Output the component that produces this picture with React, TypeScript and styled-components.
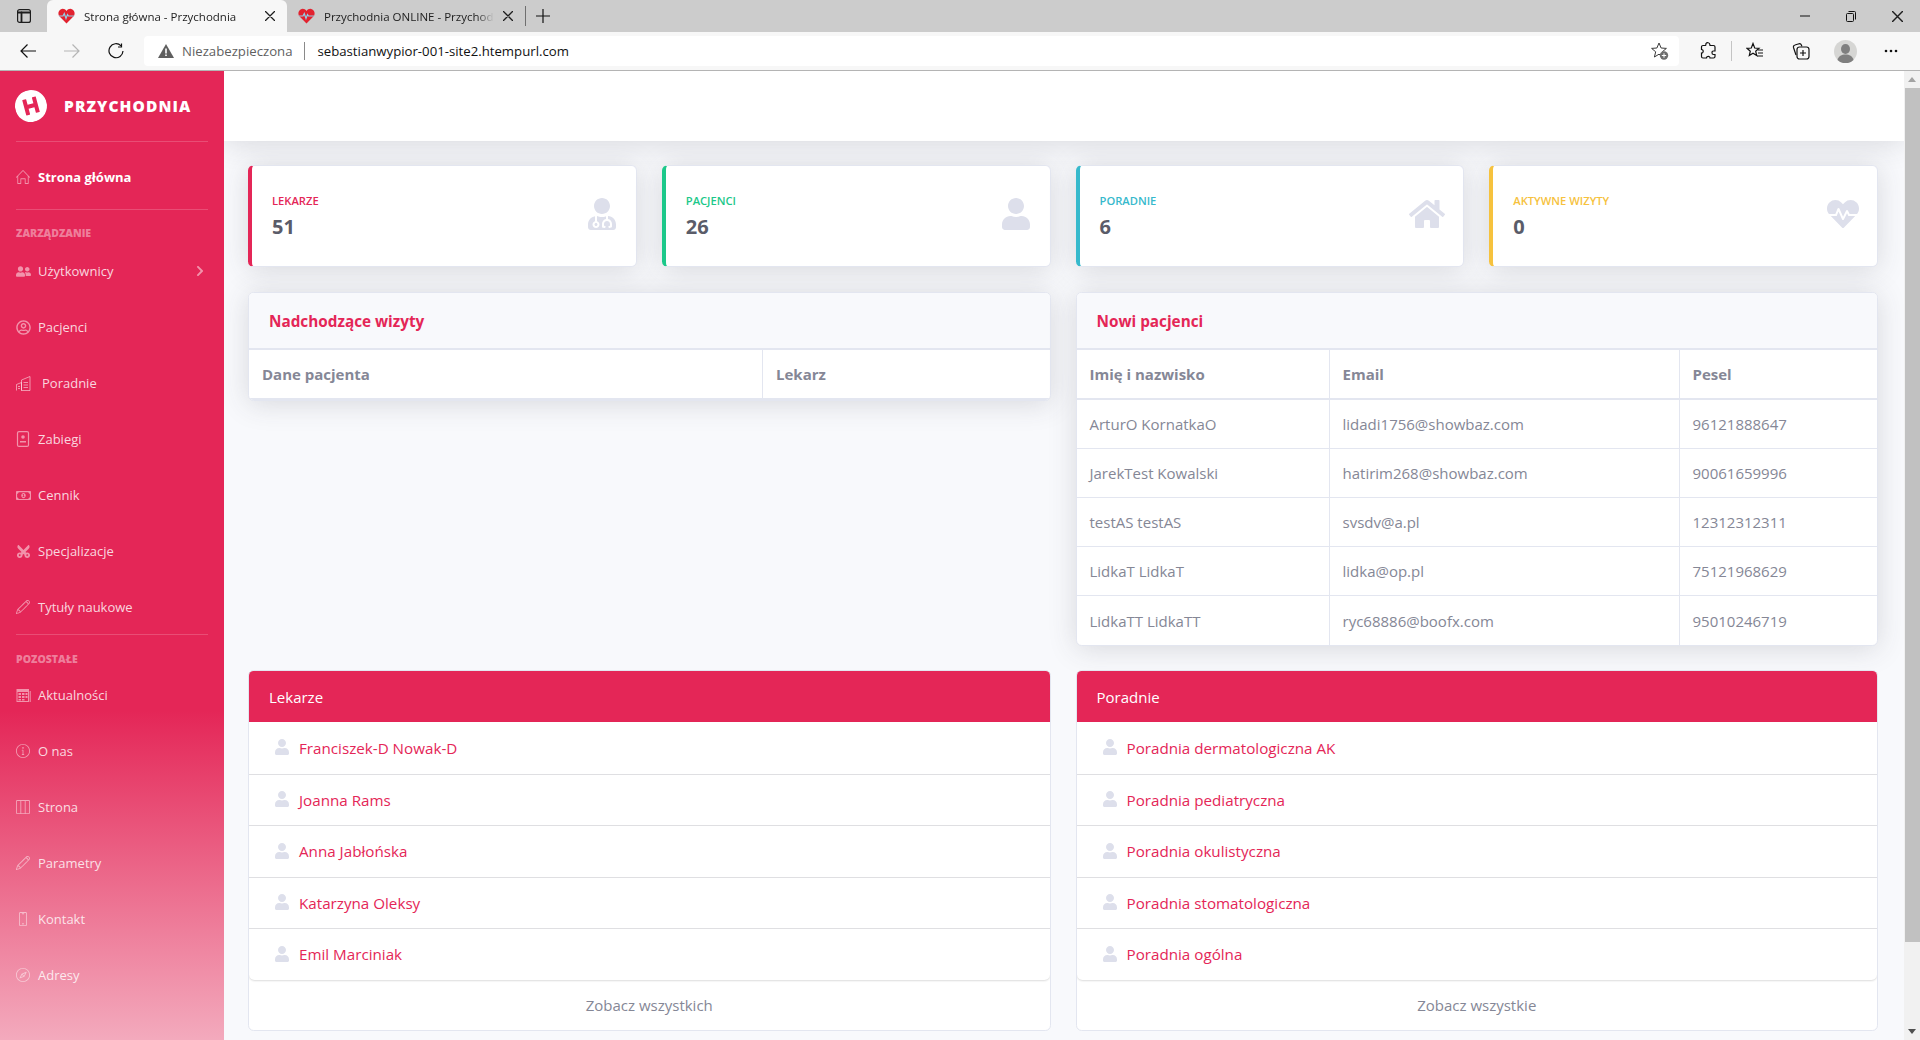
import React from "react";
import styled, { createGlobalStyle } from "styled-components";
import {
  FaUserMd,
  FaUser,
  FaHome,
  FaHeartbeat,
  FaHospitalSymbol,
  FaUserFriends,
  FaRegUserCircle,
  FaRegMoneyBillAlt,
  FaCut,
  FaChevronRight,
} from "react-icons/fa";
import { SlHome, SlPencil, SlInfo, SlScreenSmartphone, SlCompass } from "react-icons/sl";
import { BsLayoutThreeColumns } from "react-icons/bs";

const GlobalStyle = createGlobalStyle`
  * { box-sizing: border-box; }
  html, body { margin: 0; padding: 0; height: 100%; overflow: hidden; }
  body { font-family: "Open Sans", "Noto Sans", "Liberation Sans", sans-serif; background: #f8f9fc; }
`;

const red = "#e42657";
const softShadow = "0 2.4px 28px 0 rgba(58, 59, 69, 0.17)";

// browser chrome
const Window = styled.div`
  width: 1920px;
  height: 1040px;
  display: flex;
  flex-direction: column;
  overflow: hidden;
`;

const TabStrip = styled.div`
  height: 32px;
  flex: none;
  background: #cccccc;
  display: flex;
  align-items: stretch;
  color: #1d1d1d;
`;

const PanelButton = styled.div`
  width: 47px;
  display: flex;
  align-items: center;
  justify-content: center;
`;

const Tab = styled.div<{ $active?: boolean }>`
  width: ${(p) => (p.$active ? 240 : 238)}px;
  padding: 0 12px 0 11px;
  display: flex;
  align-items: center;
  gap: 9px;
  font-size: 11.5px;
  background: ${(p) => (p.$active ? "#f7f7f7" : "transparent")};
  border-radius: 6px 6px 0 0;
`;

const TabTitle = styled.span`
  flex: 1;
  white-space: nowrap;
  overflow: hidden;
  -webkit-mask-image: linear-gradient(90deg, #000 90%, transparent);
  mask-image: linear-gradient(90deg, #000 90%, transparent);
`;

const TabDivider = styled.div`
  width: 1px;
  height: 20px;
  margin: 6px 0 0;
  background: #6f6f6f;
`;

const NewTab = styled.div`
  width: 34px;
  display: flex;
  align-items: center;
  justify-content: center;
`;

const StripSpace = styled.div`
  flex: 1;
`;

const WinButton = styled.div`
  width: 46px;
  display: flex;
  align-items: center;
  justify-content: center;
`;

const Toolbar = styled.div`
  height: 39px;
  flex: none;
  background: #f7f7f7;
  border-bottom: 1px solid #b4b4b4;
  display: flex;
  align-items: center;
  padding: 0 0 0 6px;
`;

const ToolButton = styled.div<{ $w?: number }>`
  width: ${(p) => p.$w ?? 44}px;
  display: flex;
  align-items: center;
  justify-content: center;
`;

const AddressBar = styled.div`
  width: 1535px;
  height: 30px;
  margin: 0 6px;
  background: #ffffff;
  border-radius: 4px;
  display: flex;
  align-items: center;
  padding: 0 10px 0 14px;
  font-size: 13.2px;
  white-space: nowrap;
`;

const NotSecure = styled.span`
  color: #5f5f5f;
  margin-left: 8px;
`;

const UrlSeparator = styled.span`
  width: 1px;
  height: 18px;
  background: #8a8a8a;
  margin: 0 12px;
`;

const Url = styled.span`
  flex: 1;
  color: #111111;
`;

const ToolSeparator = styled.span`
  width: 1px;
  height: 20px;
  background: #c4c4c4;
`;

// page
const Viewport = styled.div`
  flex: 1;
  display: flex;
  min-height: 0;
`;

const Sidebar = styled.aside`
  width: 224px;
  flex: none;
  background: linear-gradient(180deg, ${red} 66%, #f3aabd 100%);
  overflow: hidden;
`;

const Brand = styled.div`
  height: 70px;
  padding-left: 15px;
  display: flex;
  align-items: center;
  gap: 17px;
  color: #ffffff;
  font-weight: 800;
  font-size: 15.5px;
  letter-spacing: 1.1px;
  text-transform: uppercase;
  svg { transform: rotate(-15deg); }
`;

const SideDivider = styled.div<{ $top: number }>`
  height: 1px;
  margin: ${(p) => p.$top}px 16px 0;
  background: rgba(255, 255, 255, 0.18);
`;

const SideHeading = styled.div<{ $low?: boolean }>`
  padding: ${(p) => (p.$low ? 15 : 14)}px 16px 0;
  height: ${(p) => (p.$low ? 32 : 33)}px;
  line-height: 19px;
  font-size: 10.5px;
  font-weight: 800;
  text-transform: uppercase;
  color: rgba(255, 255, 255, 0.42);
`;

const NavItem = styled.div<{ $active?: boolean }>`
  height: 56px;
  padding: 0 16px;
  margin-top: ${(p) => (p.$active ? 7 : 0)}px;
  display: flex;
  align-items: center;
  font-size: 13px;
  font-weight: ${(p) => (p.$active ? 700 : 400)};
  color: ${(p) => (p.$active ? "#ffffff" : "rgba(255,255,255,.82)")};
`;

const NavIcon = styled.span<{ $wide?: boolean }>`
  width: ${(p) => (p.$wide ? 26 : 22)}px;
  flex: none;
  display: flex;
  align-items: center;
  color: rgba(255, 255, 255, 0.5);
`;

const NavLabel = styled.span`
  flex: 1;
`;

const NavArrow = styled.span`
  display: flex;
  padding-right: 2px;
  color: rgba(255, 255, 255, 0.5);
`;

const ScissorsTurn = styled.span`
  display: flex;
  transform: rotate(-90deg);
`;

const Main = styled.main`
  flex: 1;
  min-width: 0;
  overflow: hidden;
`;

const Topbar = styled.div`
  height: 70px;
  background: #ffffff;
  box-shadow: ${softShadow};
`;

const Content = styled.div`
  padding: 24px 26px 0 24px;
`;

const StatGrid = styled.div`
  display: grid;
  grid-template-columns: repeat(4, 1fr);
  gap: 25px;
  margin-bottom: 25px;
`;

const StatCard = styled.div<{ $color: string }>`
  height: 102px;
  background: #ffffff;
  border: 1px solid #e3e6f0;
  border-left: 4px solid ${(p) => p.$color};
  border-radius: 5.6px;
  box-shadow: ${softShadow};
  padding: 0 18px 0 20px;
  display: flex;
  align-items: center;
  justify-content: space-between;
  color: ${(p) => p.$color};
`;

const StatLabel = styled.div`
  font-size: 11.2px;
  font-weight: 600;
  line-height: 16px;
  text-transform: uppercase;
  margin: 2px 0 4px;
`;

const StatValue = styled.div`
  font-size: 20px;
  font-weight: 700;
  line-height: 28px;
  color: #5a5c69;
`;

const StatIcon = styled.div`
  color: #dddfeb;
  display: flex;
  margin-top: -5px;
`;

const TwoCols = styled.div<{ $gap: number }>`
  display: grid;
  grid-template-columns: 1fr 1fr;
  gap: 25px;
  align-items: start;
  margin-bottom: ${(p) => p.$gap}px;
`;

const Panel = styled.section`
  background: #ffffff;
  border: 1px solid #e3e6f0;
  border-radius: 5.6px;
  box-shadow: ${softShadow};
  overflow: hidden;
`;

const PanelHead = styled.div`
  height: 55px;
  background: #f8f9fc;
  padding: 0 20px;
  display: flex;
  align-items: center;
  font-size: 15.3px;
  font-weight: 700;
  color: ${red};
`;

const Table = styled.table`
  width: 100%;
  border-collapse: separate;
  border-spacing: 0;
  table-layout: fixed;
  font-size: 15px;
  color: #858796;
`;

const Col = styled.col<{ $w?: number }>`
  width: ${(p) => (p.$w ? `${p.$w}px` : "auto")};
`;

const Th = styled.th`
  height: 52px;
  padding: 0 13px;
  text-align: left;
  font-weight: 700;
  border-top: 2px solid #e3e6f0;
  border-bottom: 2px solid #e3e6f0;
  border-right: 1px solid #e3e6f0;
  &:last-child { border-right: 0; }
`;

const Td = styled.td`
  height: 49px;
  padding: 0 13px;
  border-bottom: 1px solid #e3e6f0;
  border-right: 1px solid #e3e6f0;
  white-space: nowrap;
  &:last-child { border-right: 0; }
  tr:last-child > & { border-bottom: 0; }
`;

const ListCard = styled.section`
  background: #ffffff;
  border: 1px solid #e3e6f0;
  border-radius: 5.6px;
  overflow: hidden;
`;

const ListHead = styled.div`
  height: 51px;
  background: ${red};
  color: #ffffff;
  padding: 0 20px;
  display: flex;
  align-items: center;
  font-size: 15px;
`;

const List = styled.ul`
  list-style: none;
  margin: 0;
  padding: 0;
  border-radius: 0 0 5.6px 5.6px;
  box-shadow: 0 1px 2px rgba(0, 0, 0, 0.14);
`;

const ListRow = styled.li`
  height: 51.5px;
  padding: 0 0 0 25px;
  display: flex;
  align-items: center;
  gap: 9px;
  color: ${red};
  font-size: 15.2px;
  border-top: 1px solid #dfdfe2;
  &:first-child { border-top: 0; }
  svg { color: #dddfeb; flex: none; margin-top: -1px; }
`;

const ListFooter = styled.div`
  height: 50px;
  display: flex;
  align-items: center;
  justify-content: center;
  font-size: 15px;
  color: #858796;
`;

const Scrollbar = styled.div`
  width: 16px;
  flex: none;
  background: #f1f1f1;
  display: flex;
  flex-direction: column;
  align-items: stretch;
`;

const ScrollArrow = styled.div<{ $down?: boolean }>`
  height: 17px;
  flex: none;
  display: flex;
  align-items: center;
  justify-content: center;
  &::after {
    content: "";
    border-left: 4px solid transparent;
    border-right: 4px solid transparent;
    ${(p) => (p.$down ? "border-top: 5px solid #505050;" : "border-bottom: 5px solid #a3a3a3;")}
  }
`;

const ScrollThumb = styled.div`
  height: 854px;
  flex: none;
  background: #c1c1c1;
  margin-left: 1px;
`;

const ScrollTrack = styled.div`
  flex: 1;
`;

// drawn icons
function Favicon() {
  return (
    <svg width="17" height="16" viewBox="0 0 17 16">
      <path d="M8.500 15.500 1.600 8.600C-.4 6.400.2 2.800 2.600 1.400 4.800.2 7.200 1 8.500 3c1.300-2 3.700-2.800 5.900-1.600 2.400 1.400 3 5 1 7.200z" fill="#e2222f" />
      <path d="M1 8h4l1.300-2.500L8 10.500l1.500-4 1 1.500H16" fill="none" stroke="#8fd0e8" strokeWidth="1.200" />
    </svg>
  );
}

function BuildingIcon() {
  return (
    <svg width="15" height="15" viewBox="0 0 15 15" fill="none" stroke="currentColor" strokeWidth="1">
      <path d="M.5 14.500V8.500l5-2v8M5.500 14.500V4L14 .5v14z" />
      <path d="M7.500 6.500H12M7.500 9H12M7.500 11.500H12M2 10.500h2M2 12.500h2" />
    </svg>
  );
}

function BadgeIcon() {
  return (
    <svg width="14" height="16" viewBox="0 0 14 16" fill="none" stroke="currentColor" strokeWidth="1.200">
      <rect x="1.500" y=".6" width="11" height="14.800" rx="1.500" />
      <circle cx="7" cy="6" r="1.800" fill="currentColor" stroke="none" />
      <path d="M4 10h6v1.500H4z" fill="currentColor" stroke="none" />
    </svg>
  );
}

function CalendarIcon() {
  return (
    <svg width="15" height="15" viewBox="0 0 15 15" fill="currentColor">
      <path d="M.5 1h12.500v13H.5zM1.500 4v9h10.500V4z" />
      <path d="M2.500 5h2.500v2H2.500zM6 5h2.500v2H6zM9.500 5H11.500v2H9.500zM2.500 8h2.500v2H2.500zM6 8h2.500v2H6zM9.500 8H11.500v2H9.500zM2.500 11h2.500v1.500H2.500zM6 11h2.500v1.500H6z" />
      <path d="M13.500 3H15v11h-1.500z" opacity=".7" />
    </svg>
  );
}

const IconLine = { fill: "none", stroke: "currentColor", strokeLinecap: "round" as const };

function PanelIcon() {
  return (
    <svg width="14" height="14" viewBox="0 0 14 14" {...IconLine} strokeWidth="1.200">
      <rect x=".6" y=".6" width="12.800" height="12.800" rx="2" />
      <path d="M1 3.500h12" strokeWidth="2" />
      <path d="M4.500 3.500V13" strokeWidth="1.800" />
    </svg>
  );
}

function CloseIcon({ size = 10 }: { size?: number }) {
  return (
    <svg width={size} height={size} viewBox="0 0 10 10" {...IconLine} strokeWidth="1.300">
      <path d="M.5.5l9 9M9.500.5l-9 9" />
    </svg>
  );
}

function BackIcon() {
  return (
    <svg width="16" height="14" viewBox="0 0 16 14" fill="none" stroke="#111" strokeWidth="1.200">
      <path d="M16 7H1M7.500.5 1 7l6.500 6.500" />
    </svg>
  );
}

function ForwardIcon() {
  return (
    <svg width="16" height="14" viewBox="0 0 16 14" fill="none" stroke="#b5b5b5" strokeWidth="1.200">
      <path d="M0 7h15M8.500.5 15 7l-6.500 6.500" />
    </svg>
  );
}

function ReloadIcon() {
  return (
    <svg width="16" height="16" viewBox="0 0 16 16" fill="none" stroke="#111" strokeWidth="1.200">
      <path d="M13 2.800A7 7 0 1 0 15 8" />
      <path d="M13.500.5v3.500H10" />
    </svg>
  );
}

function WarnIcon() {
  return (
    <svg width="16" height="14" viewBox="0 0 16 14">
      <path d="M8 0l8 14H0z" fill="#5f5f5f" />
      <path d="M7.200 4.500h1.600v5H7.200zM7.200 10.500h1.600v1.500H7.200z" fill="#fff" />
    </svg>
  );
}

function StarPlusIcon() {
  return (
    <svg width="18" height="18" viewBox="0 0 18 18" fill="none">
      <path d="M8 1l2.100 5 5.300.4-4.100 3.400 1.300 5.200L8 12.200 3.400 15l1.300-5.200L.6 6.400 5.900 6z" stroke="#3a3a3a" strokeWidth="1" />
      <circle cx="13" cy="13.500" r="4.200" fill="#6e6e6e" />
      <path d="M13 11.300v4.400M10.800 13.500h4.400" stroke="#fff" strokeWidth="1" />
    </svg>
  );
}

function PuzzleIcon() {
  return (
    <svg width="16" height="18" viewBox="0 0 16 18" fill="none" stroke="#111" strokeWidth="1.200">
      <path d="M6 1.500c1-1.300 3.500-1 3.800.8l.2 1.200h3.500a1.500 1.500 0 0 1 1.500 1.500V9h-1.500c-2-.2-2 3.500 0 3.500H15v2a1.500 1.500 0 0 1-1.500 1.500H10c.3-2-3.500-2.300-3.500 0H3a1.500 1.500 0 0 1-1.500-1.500V11c2 .3 2.500-3.500 0-3.500V5A1.500 1.500 0 0 1 3 3.500h2.500c.5 0 .2-1.200.5-2z" />
    </svg>
  );
}

function FavoritesIcon() {
  return (
    <svg width="18" height="18" viewBox="0 0 18 18" fill="none" stroke="#111" strokeWidth="1.200">
      <path d="M7 1.500l1.700 4.500 4.300.3-3.300 2.900 1 4.300L7 11.200l-3.700 2.300 1-4.300L1 6.300 5.300 6z" />
      <path d="M12 8h5M12 11h5M11 14h6" />
    </svg>
  );
}

function CollectionsIcon() {
  return (
    <svg width="18" height="18" viewBox="0 0 18 18" fill="none" stroke="#111" strokeWidth="1.200">
      <path d="M4 13 1.500 5.500A2 2 0 0 1 3 3l4-1.200c1.200-.3 2 .3 2.500 1.500l.3 1" />
      <rect x="5" y="5" width="12" height="12" rx="2.500" />
      <path d="M11 8v6M8 11h6" />
    </svg>
  );
}

function AvatarIcon() {
  return (
    <svg width="23" height="23" viewBox="0 0 23 23">
      <circle cx="11.500" cy="11.500" r="11.500" fill="#d6d6d4" />
      <ellipse cx="11.500" cy="9" rx="4.500" ry="5" fill="#7f7f7f" />
      <path d="M3.500 20c1-4 4-5.500 8-5.500s7 1.500 8 5.500a11.500 11.500 0 0 1-16 0z" fill="#7f7f7f" />
    </svg>
  );
}

function DotsIcon() {
  return (
    <svg width="14" height="4" viewBox="0 0 14 4" fill="#111">
      <circle cx="2" cy="2" r="1.300" />
      <circle cx="7" cy="2" r="1.300" />
      <circle cx="12" cy="2" r="1.300" />
    </svg>
  );
}

function RestoreIcon() {
  return (
    <svg width="10" height="11" viewBox="0 0 10 11" fill="none" stroke="#111" strokeWidth="1">
      <rect x=".5" y="2.500" width="7" height="8" rx="1" />
      <path d="M2.500.5h6a1 1 0 0 1 1 1v7" />
    </svg>
  );
}

const management = [
  { label: "Pacjenci", icon: <FaRegUserCircle size={15} /> },
  { label: "Poradnie", icon: <BuildingIcon />, wide: true },
  { label: "Zabiegi", icon: <BadgeIcon /> },
  { label: "Cennik", icon: <FaRegMoneyBillAlt size={15} /> },
  { label: "Specjalizacje", icon: <ScissorsTurn><FaCut size={15} /></ScissorsTurn> },
  { label: "Tytuły naukowe", icon: <SlPencil size={14} /> },
];

const others = [
  { label: "Aktualności", icon: <CalendarIcon /> },
  { label: "O nas", icon: <SlInfo size={14} /> },
  { label: "Strona", icon: <BsLayoutThreeColumns size={14} /> },
  { label: "Parametry", icon: <SlPencil size={14} /> },
  { label: "Kontakt", icon: <SlScreenSmartphone size={14} /> },
  { label: "Adresy", icon: <SlCompass size={14} /> },
];

const stats = [
  { label: "Lekarze", value: "51", color: "#e42657", icon: <FaUserMd size={32} /> },
  { label: "Pacjenci", value: "26", color: "#1cc88a", icon: <FaUser size={32} /> },
  { label: "Poradnie", value: "6", color: "#36b9cc", icon: <FaHome size={36} /> },
  { label: "Aktywne wizyty", value: "0", color: "#f6c23e", icon: <FaHeartbeat size={32} /> },
];

const patients = [
  ["ArturO KornatkaO", "lidadi1756@showbaz.com", "96121888647"],
  ["JarekTest Kowalski", "hatirim268@showbaz.com", "90061659996"],
  ["testAS testAS", "svsdv@a.pl", "12312312311"],
  ["LidkaT LidkaT", "lidka@op.pl", "75121968629"],
  ["LidkaTT LidkaTT", "ryc68886@boofx.com", "95010246719"],
];

const doctors = ["Franciszek-D Nowak-D", "Joanna Rams", "Anna Jabłońska", "Katarzyna Oleksy", "Emil Marciniak"];
const clinics = [
  "Poradnia dermatologiczna AK",
  "Poradnia pediatryczna",
  "Poradnia okulistyczna",
  "Poradnia stomatologiczna",
  "Poradnia ogólna",
];

function NameList({ title, items, footer }: { title: string; items: string[]; footer: string }) {
  return (
    <ListCard>
      <ListHead>{title}</ListHead>
      <List>
        {items.map((name) => (
          <ListRow key={name}>
            <FaUser size={16} />
            {name}
          </ListRow>
        ))}
      </List>
      <ListFooter>{footer}</ListFooter>
    </ListCard>
  );
}

export default function App() {
  return (
    <Window>
      <GlobalStyle />
      <TabStrip>
        <PanelButton><PanelIcon /></PanelButton>
        <Tab $active>
          <Favicon />
          <TabTitle>Strona główna - Przychodnia</TabTitle>
          <CloseIcon />
        </Tab>
        <Tab>
          <Favicon />
          <TabTitle>Przychodnia ONLINE - Przychodnia</TabTitle>
          <CloseIcon />
        </Tab>
        <TabDivider />
        <NewTab>
          <svg width="14" height="14" viewBox="0 0 14 14" stroke="#111" strokeWidth="1.200">
            <path d="M7 0v14M0 7h14" />
          </svg>
        </NewTab>
        <StripSpace />
        <WinButton>
          <svg width="10" height="2" viewBox="0 0 10 2" stroke="#111"><path d="M0 1h10" /></svg>
        </WinButton>
        <WinButton><RestoreIcon /></WinButton>
        <WinButton><CloseIcon size={11} /></WinButton>
      </TabStrip>

      <Toolbar>
        <ToolButton><BackIcon /></ToolButton>
        <ToolButton><ForwardIcon /></ToolButton>
        <ToolButton><ReloadIcon /></ToolButton>
        <AddressBar>
          <WarnIcon />
          <NotSecure>Niezabezpieczona</NotSecure>
          <UrlSeparator />
          <Url>sebastianwypior-001-site2.htempurl.com</Url>
          <StarPlusIcon />
        </AddressBar>
        <ToolButton $w={46}><PuzzleIcon /></ToolButton>
        <ToolSeparator />
        <ToolButton $w={46}><FavoritesIcon /></ToolButton>
        <ToolButton $w={45}><CollectionsIcon /></ToolButton>
        <ToolButton $w={45}><AvatarIcon /></ToolButton>
        <ToolButton $w={46}><DotsIcon /></ToolButton>
      </Toolbar>

      <Viewport>
        <Sidebar>
          <Brand>
            <FaHospitalSymbol size={32} />
            Przychodnia
          </Brand>
          <SideDivider $top={0} />
          <NavItem $active>
            <NavIcon><SlHome size={14} /></NavIcon>
            <NavLabel>Strona główna</NavLabel>
          </NavItem>
          <SideDivider $top={4} />
          <SideHeading>Zarządzanie</SideHeading>
          <NavItem>
            <NavIcon><FaUserFriends size={15} /></NavIcon>
            <NavLabel>Użytkownicy</NavLabel>
            <NavArrow><FaChevronRight size={12} /></NavArrow>
          </NavItem>
          {management.map((item) => (
            <NavItem key={item.label}>
              <NavIcon $wide={item.wide}>{item.icon}</NavIcon>
              <NavLabel>{item.label}</NavLabel>
            </NavItem>
          ))}
          <SideDivider $top={-1} />
          <SideHeading $low>Pozostałe</SideHeading>
          {others.map((item) => (
            <NavItem key={item.label}>
              <NavIcon>{item.icon}</NavIcon>
              <NavLabel>{item.label}</NavLabel>
            </NavItem>
          ))}
        </Sidebar>

        <Main>
          <Topbar />
          <Content>
            <StatGrid>
              {stats.map((s) => (
                <StatCard key={s.label} $color={s.color}>
                  <div>
                    <StatLabel>{s.label}</StatLabel>
                    <StatValue>{s.value}</StatValue>
                  </div>
                  <StatIcon>{s.icon}</StatIcon>
                </StatCard>
              ))}
            </StatGrid>

            <TwoCols $gap={24}>
              <Panel>
                <PanelHead>Nadchodzące wizyty</PanelHead>
                <Table>
                  <colgroup><Col $w={514} /><Col /></colgroup>
                  <thead>
                    <tr><Th>Dane pacjenta</Th><Th>Lekarz</Th></tr>
                  </thead>
                </Table>
              </Panel>
              <Panel>
                <PanelHead>Nowi pacjenci</PanelHead>
                <Table>
                  <colgroup><Col $w={253} /><Col $w={350} /><Col /></colgroup>
                  <thead>
                    <tr><Th>Imię i nazwisko</Th><Th>Email</Th><Th>Pesel</Th></tr>
                  </thead>
                  <tbody>
                    {patients.map((row) => (
                      <tr key={row[2]}>
                        {row.map((cell) => <Td key={cell}>{cell}</Td>)}
                      </tr>
                    ))}
                  </tbody>
                </Table>
              </Panel>
            </TwoCols>

            <TwoCols $gap={0}>
              <NameList title="Lekarze" items={doctors} footer="Zobacz wszystkich" />
              <NameList title="Poradnie" items={clinics} footer="Zobacz wszystkie" />
            </TwoCols>
          </Content>
        </Main>

        <Scrollbar>
          <ScrollArrow />
          <ScrollThumb />
          <ScrollTrack />
          <ScrollArrow $down />
        </Scrollbar>
      </Viewport>
    </Window>
  );
}
